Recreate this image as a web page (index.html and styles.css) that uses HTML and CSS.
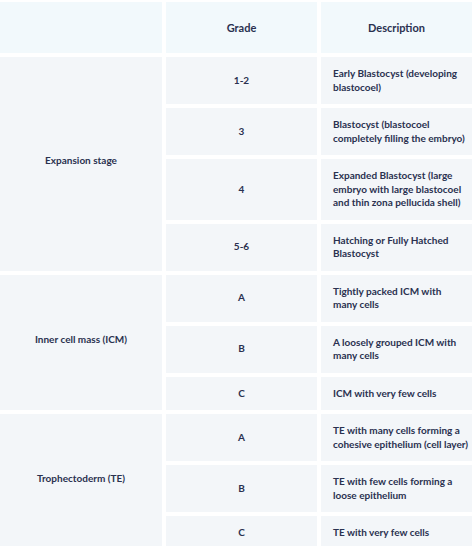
FILE: index.html
```html
<!DOCTYPE html>
<html lang="en">
<head>
<meta charset="utf-8">
<title>Blastocyst grading</title>
<link rel="stylesheet" href="styles.css">
</head>
<body>
<div class="grid">
  <div class="cell head"></div>
  <div class="cell head center">Grade</div>
  <div class="cell head center">Description</div>

  <div class="cell label span4">Expansion stage</div>
  <div class="cell center">1-2</div>
  <div class="cell desc">Early Blastocyst (developing<br>blastocoel)</div>
  <div class="cell center">3</div>
  <div class="cell desc">Blastocyst (blastocoel<br>completely filling the embryo)</div>
  <div class="cell center">4</div>
  <div class="cell desc">Expanded Blastocyst (large<br>embryo with large blastocoel<br>and thin zona pellucida shell)</div>
  <div class="cell center">5-6</div>
  <div class="cell desc">Hatching or Fully Hatched<br>Blastocyst</div>

  <div class="cell label span3">Inner cell mass (ICM)</div>
  <div class="cell center">A</div>
  <div class="cell desc">Tightly packed ICM with<br>many cells</div>
  <div class="cell center">B</div>
  <div class="cell desc">A loosely grouped ICM with<br>many cells</div>
  <div class="cell center">C</div>
  <div class="cell desc">ICM with very few cells</div>

  <div class="cell label span3">Trophectoderm (TE)</div>
  <div class="cell center">A</div>
  <div class="cell desc">TE with many cells forming a<br>cohesive epithelium (cell layer)</div>
  <div class="cell center">B</div>
  <div class="cell desc">TE with few cells forming a<br>loose epithelium</div>
  <div class="cell center">C</div>
  <div class="cell desc">TE with very few cells</div>
</div>
</body>
</html>
```
FILE: styles.css
```css
html, body {
  margin: 0;
  padding: 0;
  background: #ffffff;
}
body {
  font-family: "Lato", "Liberation Sans", sans-serif;
  font-weight: 700;
  font-size: 10px;
  line-height: 13.5px;
  color: #2a3150;
}
.grid {
  display: grid;
  grid-template-columns: 162px 151px 151px;
  gap: 4px;
  margin-top: 2px;
  width: 472px;
}
.cell {
  background: #f3f6f9;
  padding: 10px 2px 10px 12px;
  display: flex;
  align-items: center;
}
.head {
  background: #f2f9fc;
  height: 51px;
  box-sizing: border-box;
  font-size: 11px;
  padding: 0;
}
.center {
  justify-content: center;
  text-align: center;
  padding-left: 4px;
  padding-right: 4px;
}
.label {
  justify-content: center;
  text-align: center;
  padding: 0 4px 6px;
}
.span4 { grid-row: span 4; }
.span3 { grid-row: span 3; }
.desc {
  white-space: nowrap;
}
```
